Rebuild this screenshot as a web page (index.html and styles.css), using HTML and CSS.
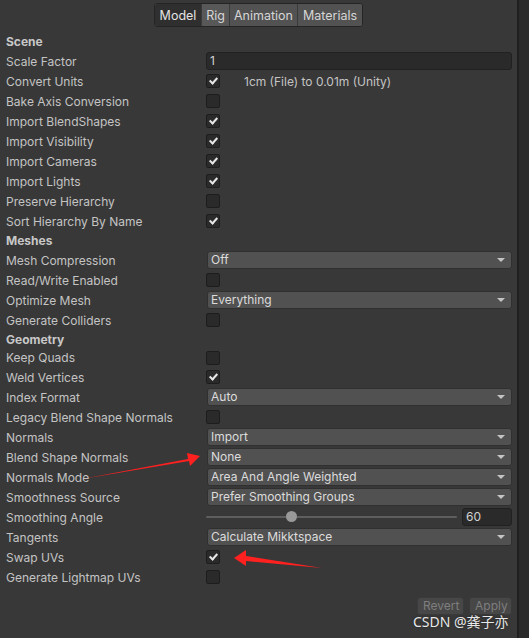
FILE: index.html
```html
<!DOCTYPE html>
<html>
<head>
<meta charset="utf-8">
<link rel="stylesheet" href="styles.css">
</head>
<body>
<div class="window">
  <div class="main">
    <div class="tabs">
      <div class="tab active">Model</div>
      <div class="tab">Rig</div>
      <div class="tab">Animation</div>
      <div class="tab">Materials</div>
    </div>
    <div class="form">
      <div class="row head h20">Scene</div>
      <div class="row"><span class="lbl">Scale Factor</span><div class="field">1</div></div>
      <div class="row"><span class="lbl">Convert Units</span><div class="val"><span class="cb on"></span><span class="note">1cm (File) to 0.01m (Unity)</span></div></div>
      <div class="row"><span class="lbl">Bake Axis Conversion</span><div class="val"><span class="cb"></span></div></div>
      <div class="row"><span class="lbl">Import BlendShapes</span><div class="val"><span class="cb on"></span></div></div>
      <div class="row"><span class="lbl">Import Visibility</span><div class="val"><span class="cb on"></span></div></div>
      <div class="row"><span class="lbl">Import Cameras</span><div class="val"><span class="cb on"></span></div></div>
      <div class="row"><span class="lbl">Import Lights</span><div class="val"><span class="cb on"></span></div></div>
      <div class="row"><span class="lbl">Preserve Hierarchy</span><div class="val"><span class="cb"></span></div></div>
      <div class="row"><span class="lbl">Sort Hierarchy By Name</span><div class="val"><span class="cb on"></span></div></div>
      <div class="row head h19">Meshes</div>
      <div class="row"><span class="lbl">Mesh Compression</span><div class="dd">Off</div></div>
      <div class="row"><span class="lbl">Read/Write Enabled</span><div class="val"><span class="cb"></span></div></div>
      <div class="row"><span class="lbl">Optimize Mesh</span><div class="dd">Everything</div></div>
      <div class="row"><span class="lbl">Generate Colliders</span><div class="val"><span class="cb"></span></div></div>
      <div class="row head h18">Geometry</div>
      <div class="row h19"><span class="lbl">Keep Quads</span><div class="val"><span class="cb"></span></div></div>
      <div class="row"><span class="lbl">Weld Vertices</span><div class="val"><span class="cb on"></span></div></div>
      <div class="row"><span class="lbl">Index Format</span><div class="dd">Auto</div></div>
      <div class="row"><span class="lbl">Legacy Blend Shape Normals</span><div class="val"><span class="cb"></span></div></div>
      <div class="row"><span class="lbl">Normals</span><div class="dd">Import</div></div>
      <div class="row"><span class="lbl">Blend Shape Normals</span><div class="dd">None</div></div>
      <div class="row"><span class="lbl">Normals Mode</span><div class="dd">Area And Angle Weighted</div></div>
      <div class="row"><span class="lbl">Smoothness Source</span><div class="dd">Prefer Smoothing Groups</div></div>
      <div class="row"><span class="lbl">Smoothing Angle</span><div class="slider"><div class="track"><span class="thumb"></span></div><div class="num">60</div></div></div>
      <div class="row"><span class="lbl">Tangents</span><div class="dd">Calculate Mikktspace</div></div>
      <div class="row"><span class="lbl">Swap UVs</span><div class="val"><span class="cb on"></span></div></div>
      <div class="row"><span class="lbl">Generate Lightmap UVs</span><div class="val"><span class="cb"></span></div></div>
    </div>
    <div class="buttons">
      <div class="btn">Revert</div>
      <div class="btn">Apply</div>
    </div>
    <div class="watermark">CSDN @龚子亦</div>
    <svg class="arrows" width="517" height="638" viewBox="0 0 517 638">
      <path d="M82 479 L188 459 L187 453 L200 456 L190 466 L189 461 Z" fill="#ff2020"/>
      <path d="M322 568 L246 556 L246 550 L234 558 L246 566 L246 561 Z" fill="#ff2020"/>
    </svg>
  </div>
  <div class="side"></div>
</div>
</body>
</html>
```
FILE: styles.css
```css
html, body {
  margin: 0;
  padding: 0;
  background: #383838;
}
body {
  font-family: Inter, "Noto Sans", "Noto Sans CJK SC", sans-serif;
  font-size: 12px;
  color: #c4c4c4;
}
.window {
  display: flex;
  width: 529px;
  height: 638px;
  overflow: hidden;
}
.main {
  position: relative;
  width: 517px;
  height: 638px;
  background: #383838;
}
.side {
  width: 10px;
  border-left: 2px solid #1f1f1f;
  background: #2b2b2b;
}
.tabs {
  display: flex;
  margin: 3px 0 0 154px;
  width: 207px;
  height: 22px;
  border: 1px solid #242424;
  border-radius: 3px;
  overflow: hidden;
  background: #565656;
}
.tab {
  display: flex;
  align-items: center;
  justify-content: center;
  font-size: 12.5px;
  color: #d6d6d6;
  border-left: 1px solid #3a3a3a;
  background: #585858;
}
.tab:nth-child(1) { width: 46px; border-left: none; }
.tab:nth-child(2) { width: 27px; }
.tab:nth-child(3) { width: 67px; background: #525252; }
.tab:nth-child(4) { width: 64px; background: #525252; }
.tab.active { background: #2f2f2f; color: #e2e2e2; }
.form {
  margin-top: 4px;
  padding-left: 6px;
}
.row {
  display: grid;
  grid-template-columns: 200px 306px;
  align-items: center;
  height: 20px;
  white-space: nowrap;
}
.row.h19 { height: 19px; }
.row.h18 { height: 18px; }
.head {
  font-weight: 700;
  color: #c8c8c8;
  display: flex;
}
.lbl { color: #c4c4c4; }
.val {
  display: flex;
  align-items: center;
}
.cb {
  box-sizing: border-box;
  width: 14px;
  height: 14px;
  border: 1px solid #1d1d1d;
  border-radius: 2px;
  background: #2a2a2a;
  position: relative;
}
.cb.on::after {
  content: "";
  position: absolute;
  top: 1px;
  left: 4px;
  width: 3px;
  height: 6px;
  border-right: 2px solid #e6e6e6;
  border-bottom: 2px solid #e6e6e6;
  transform: rotate(42deg);
  transform-origin: center;
}
.note {
  margin-left: 24px;
  color: #c4c4c4;
}
.field {
  box-sizing: border-box;
  height: 18px;
  line-height: 16px;
  padding-left: 3px;
  background: #2a2a2a;
  border: 1px solid #212121;
  border-radius: 3px;
  color: #d2d2d2;
}
.dd {
  box-sizing: border-box;
  height: 18px;
  line-height: 16px;
  margin-left: 1px;
  padding-left: 3px;
  background: #515151;
  border: 1px solid #303030;
  border-radius: 3px;
  color: #dcdcdc;
  position: relative;
}
.dd::after {
  content: "";
  position: absolute;
  right: 6px;
  top: 6px;
  border-left: 4px solid transparent;
  border-right: 4px solid transparent;
  border-top: 4px solid #c4c4c4;
}
.slider {
  display: flex;
  align-items: center;
  gap: 5px;
}
.track {
  position: relative;
  flex: 1;
  height: 2px;
  background: #5e5e5e;
  border-radius: 1px;
}
.thumb {
  position: absolute;
  left: 80px;
  top: -5px;
  width: 11px;
  height: 11px;
  border-radius: 50%;
  background: #999999;
}
.num {
  box-sizing: border-box;
  width: 50px;
  height: 18px;
  line-height: 16px;
  padding-left: 3px;
  background: #2a2a2a;
  border: 1px solid #212121;
  border-radius: 3px;
  color: #d2d2d2;
}
.buttons {
  display: flex;
  justify-content: flex-end;
  gap: 5px;
  margin-top: 10px;
  padding-right: 5px;
}
.btn {
  box-sizing: border-box;
  height: 18px;
  line-height: 16px;
  padding: 0 5px;
  background: #474747;
  border: 1px solid #3a3a3a;
  border-radius: 3px;
  color: #7e7e7e;
}
.btn:first-child { width: 47px; }
.btn:last-child { width: 43px; }
.watermark {
  position: absolute;
  left: 413px;
  top: 611px;
  font-size: 14px;
  color: #e8e8e8;
  text-shadow: 0 0 2px #222;
  font-family: "Noto Sans", "Noto Sans CJK SC", sans-serif;
}
.arrows {
  position: absolute;
  left: 0;
  top: 0;
  pointer-events: none;
}
```
